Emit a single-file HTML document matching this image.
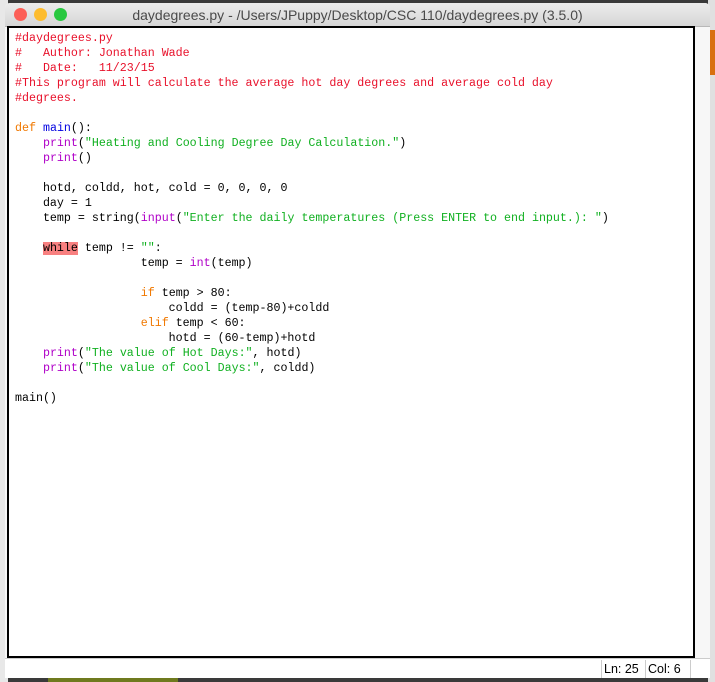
<!DOCTYPE html>
<html><head><style>
body{margin:0;width:715px;height:682px;overflow:hidden;background:#3a3a3a;position:relative;font-family:"Liberation Sans",sans-serif}
.bgl{position:absolute;left:0;top:0;width:8px;height:682px;background:#e8e8e8}
.bgr{position:absolute;left:708px;top:0;width:7px;height:682px;background:#e0e0e0}
.org{position:absolute;left:708px;top:30px;width:7px;height:45px;background:#d87010}
.olive{position:absolute;left:48px;top:678px;width:130px;height:4px;background:#6f7a1e}
.win{position:absolute;left:5px;top:3px;width:705px;height:675px;background:#f7f7f7;border-radius:5px 5px 0 0;overflow:hidden}
.title{height:23px;background:linear-gradient(#ececec,#d6d6d6);border-bottom:1px solid #b8b8b8;text-align:center;font-size:14px;line-height:24px;color:#4a4a4a}
.dot{position:absolute;top:5px;width:13px;height:13px;border-radius:50%}
.ed{position:absolute;left:2px;top:23px;width:684px;height:628px;background:#fff;border:2px solid #000}
pre{margin:0;position:absolute;left:6px;top:3px;font-family:"Liberation Mono",monospace;font-size:11.65px;line-height:15px;color:#000}
.c{color:#e8102a}.k{color:#f07800}.b{color:#b000c8}.s{color:#10b020}.f{color:#0000e0}
.hl{background:#f88080}
.status{position:absolute;left:0;top:655px;width:705px;height:20px;background:#fff;border-top:1px solid #ccc}
.cell{position:absolute;top:1px;height:18px;border-left:1px solid #ccc;font-size:12.5px;line-height:19px;padding-left:2px;color:#000}
</style></head><body>
<div class="bgl"></div><div class="bgr"></div><div class="org"></div><div class="olive"></div>
<div class="win">
<div class="title">daydegrees.py - /Users/JPuppy/Desktop/CSC 110/daydegrees.py (3.5.0)</div>
<div class="dot" style="left:9px;background:#fc5f57"></div>
<div class="dot" style="left:29px;background:#fdbc2e"></div>
<div class="dot" style="left:49px;background:#28c840"></div>
<div class="ed"><pre><span class="c">#daydegrees.py
#   Author: Jonathan Wade
#   Date:   11/23/15
#This program will calculate the average hot day degrees and average cold day
#degrees.</span>

<span class="k">def</span> <span class="f">main</span>():
    <span class="b">print</span>(<span class="s">"Heating and Cooling Degree Day Calculation."</span>)
    <span class="b">print</span>()

    hotd, coldd, hot, cold = 0, 0, 0, 0
    day = 1
    temp = string(<span class="b">input</span>(<span class="s">"Enter the daily temperatures (Press ENTER to end input.): "</span>)

    <span class="k hl" style="color:#000">while</span> temp != <span class="s">""</span>:
                  temp = <span class="b">int</span>(temp)

                  <span class="k">if</span> temp &gt; 80:
                      coldd = (temp-80)+coldd
                  <span class="k">elif</span> temp &lt; 60:
                      hotd = (60-temp)+hotd
    <span class="b">print</span>(<span class="s">"The value of Hot Days:"</span>, hotd)
    <span class="b">print</span>(<span class="s">"The value of Cool Days:"</span>, coldd)

main()</pre></div>
<div class="status">
<div class="cell" style="left:596px;width:42px">Ln: 25</div>
<div class="cell" style="left:640px;width:42px">Col: 6</div>
<div class="cell" style="left:685px;width:18px"></div>
</div>
</div>
</body></html>
